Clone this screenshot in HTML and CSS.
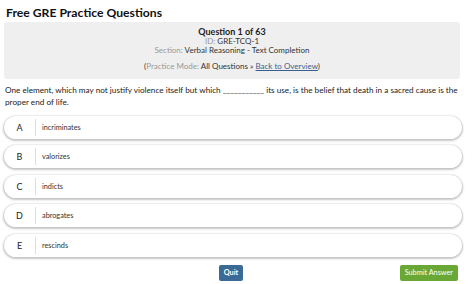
FILE: index.html
```html
<!DOCTYPE html>
<html>
<head>
<meta charset="utf-8">
<link rel="stylesheet" href="styles.css">
</head>
<body>
<div class="page">
  <h1 class="title">Free GRE Practice Questions</h1>
  <div class="info">
    <div class="qnum">Question 1 of 63</div>
    <div class="meta"><span class="lbl">ID:</span> GRE-TCQ-1</div>
    <div class="meta"><span class="lbl">Section:</span> Verbal Reasoning - Text Completion</div>
    <div class="meta mode">(<span class="lbl">Practice Mode:</span> All Questions » <a class="link" href="#">Back to Overview</a>)</div>
  </div>
  <p class="question">One element, which may not justify violence itself but which ___________ its use, is the belief that death in a sacred cause is the proper end of life.</p>
  <div class="options">
    <div class="opt"><span class="letter">A</span><span class="text">incriminates</span></div>
    <div class="opt"><span class="letter">B</span><span class="text">valorizes</span></div>
    <div class="opt"><span class="letter">C</span><span class="text">indicts</span></div>
    <div class="opt"><span class="letter">D</span><span class="text">abrogates</span></div>
    <div class="opt"><span class="letter">E</span><span class="text">rescinds</span></div>
  </div>
  <div class="actions">
    <span class="spacer"></span>
    <button class="btn quit">Quit</button>
    <span class="spacer right"><button class="btn submit">Submit Answer</button></span>
  </div>
</div>
</body>
</html>
```
FILE: styles.css
```css
html, body { margin: 0; padding: 0; background: #fff; }
body { font-family: "Lato", "Open Sans", sans-serif; color: #222; }
.page { padding: 4px 12px 0 4px; width: 458px; }
.title { margin: 0 0 0 2px; font-size: 12.2px; font-weight: 700; line-height: 18px; color: #111; letter-spacing: 0; }
.info { background: #efefef; border-radius: 3px; margin-top: 0; margin-right: 2px; padding: 5px 0 8px; text-align: center; font-size: 8px; line-height: 8.5px; color: #333; }
.qnum { font-weight: 700; font-size: 9px; line-height: 10px; color: #222; }
.lbl { color: #999; }
.mode { margin-top: 8px; }
.link { color: #3a5f8f; text-decoration: underline; }
.question { margin: 5px 0 0 1px; font-size: 8.2px; line-height: 12px; color: #222; }
.options { display: flex; flex-direction: column; gap: 6.5px; margin-top: 8px; }
.opt { display: flex; align-items: center; height: 23px; border-radius: 12px; background: #fff; box-shadow: 0 1px 2px 1px rgba(0,0,0,0.22), 0 0 1px rgba(0,0,0,0.15); }
.letter { width: 31px; text-align: center; font-size: 9px; color: #222; border-right: 1px solid #ddd; height: 17px; line-height: 17px; }
.text { padding-left: 6px; font-size: 7.3px; color: #333; }
.actions { display: flex; align-items: center; margin-top: 8px; padding-right: 4px; }
.spacer { flex: 1; display: flex; }
.spacer.right { justify-content: flex-end; }
.btn { border: none; border-radius: 2px; color: #fff; font-family: "Lato", sans-serif; font-size: 7.3px; font-weight: 700; height: 16px; padding: 0 5px; }
.quit { background: #3b6a96; }
.submit { background: #6aa836; font-weight: 400; padding: 0 5px; }
```
